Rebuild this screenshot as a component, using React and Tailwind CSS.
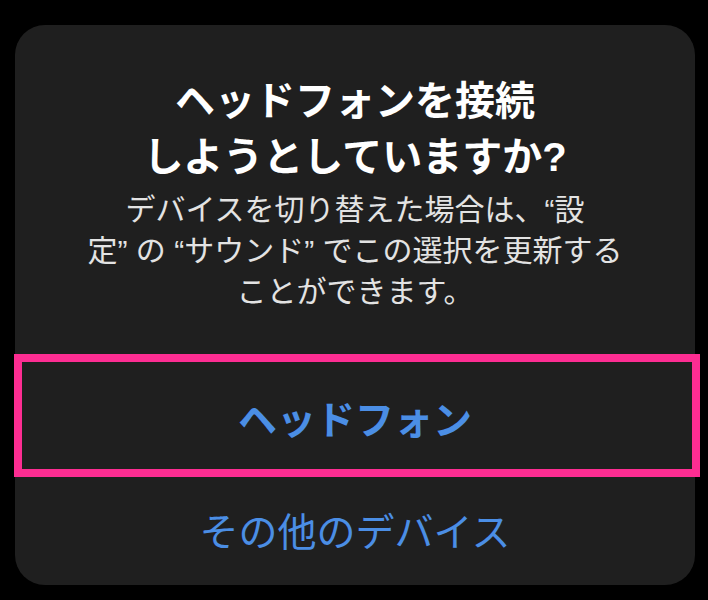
import React from "react";

const FONT = { fontFamily: '"Liberation Sans", "Noto Sans CJK JP", sans-serif' };

export default function App() {
  return (
    <div className="w-[708px] h-[600px] bg-black overflow-hidden pt-[25px] pl-[15px]" style={FONT}>
      <div className="relative w-[680px] h-[560px] bg-[#1f1f1f] rounded-[30px] flex flex-col">
        {/* Message */}
        <div className="h-[330px] pt-[48px] flex flex-col items-center text-center">
          <h1 className="text-[40px] leading-[56px] font-bold text-white">
            ヘッドフォンを接続
            <br />
            しようとしていますか?
          </h1>
          <p className="mt-[4px] text-[30px] leading-[41px] text-[#e3e3e3]">
            デバイスを切り替えた場合は、“設
            <br />
            定” の “サウンド” でこの選択を更新する
            <br />
            ことができます。
          </p>
        </div>

        {/* Buttons */}
        <button className="h-[122px] pt-[10px] flex items-center justify-center text-[39px] font-semibold text-[#4b8ee5]">
          ヘッドフォン
        </button>
        <button className="h-[108px] pt-[4px] flex items-center justify-center text-[39px] text-[#4b8ee5]">
          その他のデバイス
        </button>

        {/* Highlight */}
        <div className="absolute left-[-1px] top-[329px] w-[686px] h-[123px] border-[8px] border-[#fd2d92] pointer-events-none" />
      </div>
    </div>
  );
}
